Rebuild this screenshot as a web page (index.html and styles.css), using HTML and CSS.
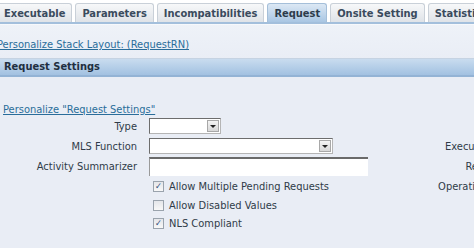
FILE: index.html
```html
<!DOCTYPE html>
<html>
<head>
<meta charset="utf-8">
<link rel="stylesheet" href="styles.css">
</head>
<body>
<div class="page">
  <div class="tabs">
    <div class="tab first">Executable</div>
    <div class="tab">Parameters</div>
    <div class="tab">Incompatibilities</div>
    <div class="tab active">Request</div>
    <div class="tab">Onsite Setting</div>
    <div class="tab">Statistics</div>
  </div>
  <div class="tabline"></div>
  <div class="stack-link"><a href="#">Personalize Stack Layout: (RequestRN)</a></div>
  <div class="header">Request Settings</div>
  <div class="region-link"><a href="#">Personalize "Request Settings"</a></div>
  <div class="form">
    <div class="left">
      <div class="row"><label class="lbl">Type</label><div class="select short"><span class="btn"><span class="arrow"></span></span></div></div>
      <div class="row"><label class="lbl">MLS Function</label><div class="select long"><span class="btn"><span class="arrow"></span></span></div></div>
      <div class="row"><label class="lbl">Activity Summarizer</label><div class="input"></div></div>
      <div class="row"><span class="lbl"></span><label class="check"><span class="box on">&#10003;</span>Allow Multiple Pending Requests</label></div>
      <div class="row tight"><span class="lbl"></span><label class="check"><span class="box"></span>Allow Disabled Values</label></div>
      <div class="row tight"><span class="lbl"></span><label class="check"><span class="box on">&#10003;</span>NLS Compliant</label></div>
    </div>
    <div class="right">
      <div class="row"><span class="rlbl"></span></div>
      <div class="row"><span class="rlbl">Executable Options</span></div>
      <div class="row"><span class="rlbl">Retention Days</span></div>
      <div class="row"><span class="rlbl">Operating Unit Mode</span></div>
    </div>
  </div>
</div>
</body>
</html>
```
FILE: styles.css
```css
html, body {
  margin: 0;
  padding: 0;
}
body {
  width: 474px;
  height: 248px;
  overflow: hidden;
  background: #e9edf5;
  font-family: Tahoma, "DejaVu Sans Condensed", "DejaVu Sans", sans-serif;
  font-size: 11px;
  color: #2f3b48;
}
.page {
  width: 474px;
  height: 248px;
  overflow: hidden;
  background: linear-gradient(#ffffff 0px, #ffffff 24px, #eef2f8 25px, #e9edf5 60px);
}
.tabs {
  display: flex;
  gap: 3px;
  padding-top: 3px;
  margin-left: -4px;
  height: 19px;
  white-space: nowrap;
}
.tab {
  flex: none;
  height: 19px;
  box-sizing: border-box;
  padding: 2px 6px 0 6px;
  border: 1px solid #c9d0d8;
  border-bottom: none;
  border-radius: 3px 3px 0 0;
  background: linear-gradient(#f7f8f9, #dfe3e8);
  font-weight: bold;
  font-size: 11px;
  line-height: 16px;
  color: #3a4b5d;
}
.tab.first {
  padding-left: 7px;
}
.tab.active {
  background: linear-gradient(#dce8f4, #a9c6e3);
  border-color: #a5bfd9;
  color: #2c3b4b;
}
.tabline {
  height: 2px;
  background: #a3bfdc;
}
a {
  color: #2a6d9a;
  text-decoration: underline;
}
.stack-link {
  margin-top: 13px;
  margin-left: -3px;
  height: 16px;
  line-height: 16px;
}
.header {
  margin-top: 5px;
  height: 16px;
  line-height: 16px;
  padding-left: 4px;
  border-top: 1px solid #c6d3e2;
  border-bottom: 2px solid #93b3d5;
  background: linear-gradient(#c9dcef, #a2c1e1);
  font-weight: bold;
  font-size: 11px;
  color: #1f2f40;
}
.region-link {
  margin-top: 25px;
  padding-left: 3px;
  height: 16px;
  line-height: 16px;
}
.form {
  display: flex;
  margin-top: -2px;
}
.left {
  display: flex;
  flex-direction: column;
  width: 380px;
  flex: none;
}
.row {
  display: flex;
  align-items: center;
  gap: 12px;
  height: 20px;
}
.row.tight {
  height: 18.5px;
}
.lbl {
  width: 137px;
  flex: none;
  text-align: right;
  white-space: nowrap;
}
.select {
  position: relative;
  height: 16px;
  box-sizing: border-box;
  background: #ffffff;
  border: 1px solid #6d6d6d;
  border-right-color: #b5b5b5;
  border-bottom-color: #b5b5b5;
}
.select.short { width: 72px; }
.select.long { width: 184px; }
.btn {
  position: absolute;
  right: 1px;
  top: 1px;
  width: 12px;
  height: 12px;
  background: linear-gradient(#f4f4f4, #d8d8d8);
  border: 1px solid #a8a8a8;
  box-sizing: border-box;
  display: flex;
  align-items: center;
  justify-content: center;
}
.arrow {
  width: 0;
  height: 0;
  border-left: 3px solid transparent;
  border-right: 3px solid transparent;
  border-top: 3px solid #222;
}
.input {
  width: 219px;
  height: 19px;
  box-sizing: border-box;
  background: #ffffff;
  border-top: 2px solid #6a6a6a;
  border-left: 1px solid #9a9a9a;
}
.check {
  display: flex;
  align-items: center;
  gap: 5px;
  margin-left: 4px;
  white-space: nowrap;
}
.box {
  width: 11px;
  height: 11px;
  box-sizing: border-box;
  border: 1px solid #9aa3ad;
  background: linear-gradient(#e4e6ea, #f8f8f8);
  font-size: 9px;
  line-height: 9px;
  text-align: center;
  color: #2e4a7a;
  font-weight: bold;
}
.right {
  display: flex;
  flex-direction: column;
  flex: none;
}
.rlbl {
  width: 161px;
  text-align: right;
  white-space: nowrap;
}
```
